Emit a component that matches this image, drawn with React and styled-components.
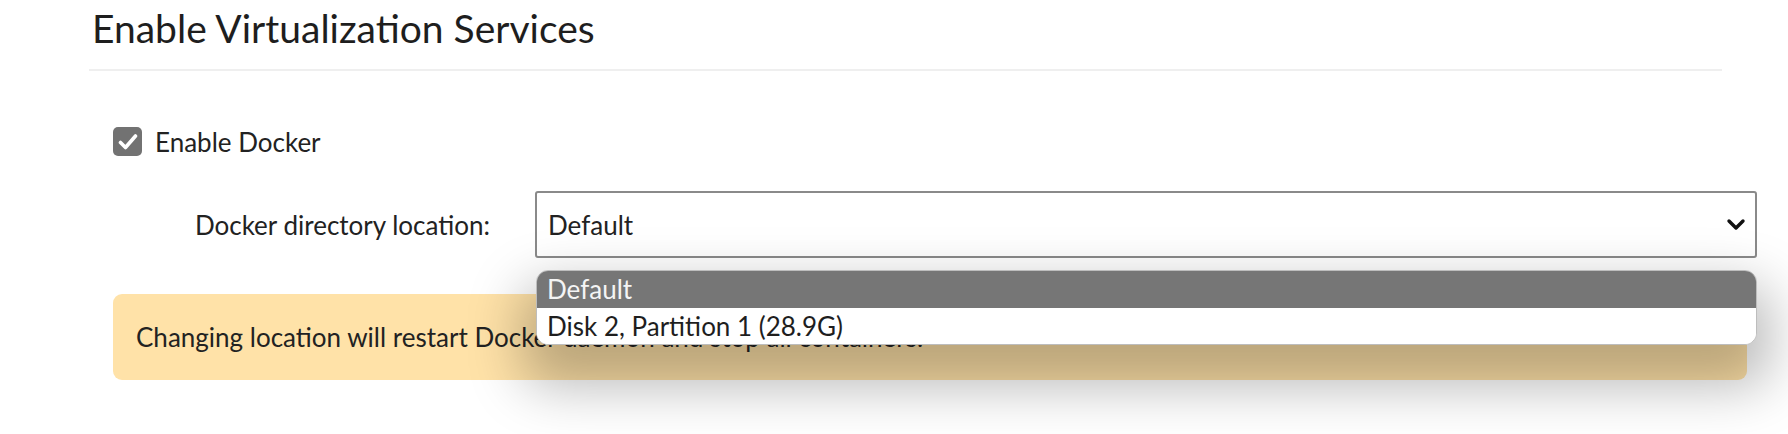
import React, { useState } from 'react'
import styled, { createGlobalStyle } from 'styled-components'

const GlobalStyle = createGlobalStyle`
  html, body {
    margin: 0;
    padding: 0;
    background: #fff;
    overflow: hidden;
  }
  body {
    font-family: Lato, 'Open Sans', sans-serif;
    color: #222;
  }
`

const Page = styled.div`
  width: 1788px;
  height: 434px;
  padding: 0 66px 0 89px;
  box-sizing: border-box;
  position: relative;
`

const Title = styled.h2`
  margin: 0;
  padding: 5px 0 0 3px;
  height: 71px;
  box-sizing: border-box;
  font-size: 39px;
  font-weight: 400;
  line-height: 46px;
  color: #1e1e1e;
  border-bottom: 2px solid #efefef;
`

const Body = styled.div`
  padding: 56px 0 0 24px;
  display: flex;
  flex-direction: column;
`

const CheckRow = styled.label`
  display: flex;
  align-items: center;
  gap: 13px;
  font-size: 26px;
  height: 29px;
`

const Box = styled.span`
  width: 29px;
  height: 29px;
  border-radius: 5px;
  background: ${p => (p.checked ? '#727272' : '#fff')};
  border: ${p => (p.checked ? 'none' : '2px solid #727272')};
  box-sizing: border-box;
  display: flex;
  align-items: center;
  justify-content: center;
`

const FieldRow = styled.div`
  display: flex;
  align-items: center;
  margin-top: 35px;
  position: relative;
`

const Label = styled.span`
  width: 422px;
  text-align: right;
  padding-right: 45px;
  box-sizing: border-box;
  font-size: 26px;
`

const Select = styled.div`
  flex: 1;
  height: 67px;
  margin-right: -35px;
  border: 2px solid #8a8a8a;
  border-radius: 3px;
  box-sizing: border-box;
  display: flex;
  align-items: center;
  justify-content: space-between;
  padding: 0 9px 0 11px;
  font-size: 26px;
  background: #fff;
`

const Menu = styled.ul`
  position: absolute;
  left: 423px;
  right: -35px;
  top: 79px;
  margin: 0;
  padding: 0;
  list-style: none;
  background: #fff;
  border: 1px solid #bdbdbd;
  border-radius: 12px;
  overflow: hidden;
  box-shadow: 0 28px 54px 14px rgba(0, 0, 0, 0.27);
  z-index: 2;
`

const Option = styled.li`
  height: ${p => (p.active ? 37 : 36)}px;
  line-height: ${p => (p.active ? 37 : 36)}px;
  padding-left: 10px;
  font-size: 26px;
  background: ${p => (p.active ? '#767676' : '#fff')};
  color: ${p => (p.active ? '#f4f4f4' : '#1e1e1e')};
`

const Alert = styled.div`
  margin-top: 36px;
  margin-right: -25px;
  height: 86px;
  border-radius: 9px;
  background: #ffe2a8;
  display: flex;
  align-items: center;
  padding-left: 23px;
  font-size: 26px;
  color: #222;
`

const Check = () => (
  <svg width='20' height='18' viewBox='0 0 20 18'>
    <path d='M2.5 9.5 L7.5 14.5 L17.5 3' fill='none' stroke='#fff' strokeWidth='3.6' strokeLinecap='round' strokeLinejoin='round' />
  </svg>
)

const Chevron = () => (
  <svg width='20' height='14' viewBox='0 0 20 14'>
    <path d='M3 3 L10 10 L17 3' fill='none' stroke='#111' strokeWidth='3.4' strokeLinecap='round' strokeLinejoin='round' />
  </svg>
)

const options = ['Default', 'Disk 2, Partition 1 (28.9G)']

const App = () => {
  const [enabled, setEnabled] = useState(true)
  const [location, setLocation] = useState('Default')

  return (
    <>
      <GlobalStyle />
      <Page>
        <Title>Enable Virtualization Services</Title>
        <Body>
          <CheckRow onClick={() => setEnabled(!enabled)}>
            <Box checked={enabled}>{enabled && <Check />}</Box>
            Enable Docker
          </CheckRow>
          <FieldRow>
            <Label>Docker directory location:</Label>
            <Select>
              {location}
              <Chevron />
            </Select>
            <Menu>
              {options.map(o => (
                <Option key={o} active={o === location} onClick={() => setLocation(o)}>
                  {o}
                </Option>
              ))}
            </Menu>
          </FieldRow>
          <Alert>Changing location will restart Docker daemon and stop all containers.</Alert>
        </Body>
      </Page>
    </>
  )
}

export default App
